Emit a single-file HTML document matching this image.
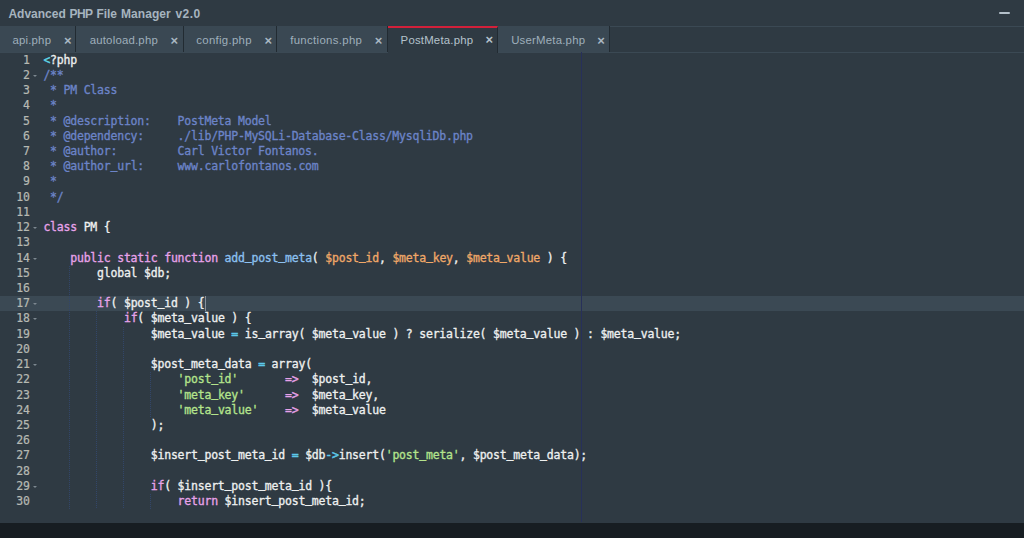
<!DOCTYPE html>
<html><head><meta charset="utf-8"><title>Advanced PHP File Manager v2.0</title>
<style>
html,body{margin:0;padding:0}
body{width:1024px;height:538px;overflow:hidden;background:#2f3a43;position:relative;font-family:"Liberation Sans",sans-serif}
#title{position:absolute;left:0;top:0;width:1024px;height:26px;background:#2f3a43}
#title .t{position:absolute;left:0;top:5.5px;font-size:12px;letter-spacing:0.17px;font-weight:bold;color:#a6b4bf;line-height:16px;white-space:nowrap}
#title .t span{position:absolute;top:0;white-space:pre}
#min{position:absolute;left:999px;top:12px;width:11px;height:2px;background:#b4c0ca;border-radius:1px}
#tabs{position:absolute;left:0;top:26px;width:1024px;height:27px;background:#2f3a43;border-top:1px solid #3b4954;border-bottom:1px solid #3b4954;box-sizing:border-box}
.tab{position:absolute;top:-1px;height:26px;background:#3a4853;box-sizing:border-box;border-right:1px solid #222b32}
.tab.act{background:#2f3a43;border-top:2px solid #d3203a;height:27px}
.tab .tt{position:absolute;top:6px;font-size:11.4px;line-height:16px;color:#9fafbb;white-space:nowrap}
.tab.act .tt,.tab.act .tx{top:4px;color:#b5c2cc}
.tab .tx{position:absolute;top:6.5px;font-size:13px;line-height:16px;color:#a9b7c2;font-weight:bold}
#ed{position:absolute;left:0;top:0;width:1024px;height:522.5px;font-family:"DejaVu Sans Mono","Liberation Mono",monospace;font-size:11.5px;letter-spacing:-0.2136px;-webkit-text-stroke:0.32px}
.ln{position:absolute;left:0;width:1024px;height:15.22px;line-height:15.22px;white-space:pre}
.ln.cur{background:#3b4954}
.num{position:absolute;left:0;width:29.6px;text-align:right;color:#b6b9b3;-webkit-text-stroke:0.2px}
.fd{position:absolute;left:33px;top:7px;width:0;height:0;border-left:2px solid transparent;border-right:2px solid transparent;border-top:2.5px solid #7d8790}
.code{position:absolute;left:43.4px;color:#eef0f0}
u{text-decoration:none;position:relative;top:-1.6px}
.c{color:#6c84c8} .k{color:#e8a2ea} .f{color:#8cc0f0} .p{color:#f0a868} .s{color:#b4e48c} .o{color:#5cc8ea;-webkit-text-stroke:0.5px} .lt{color:#5fd8e8} .w{color:#eef0f0}
#pm{position:absolute;left:581px;top:52px;width:1px;height:470px;background:#27305a}
.ig{position:absolute;width:1px;background-image:linear-gradient(to bottom,#32466a 50%,transparent 50%);background-size:1px 2px}
#bot{position:absolute;left:0;top:522.5px;width:1024px;height:15.5px;background:#171d22}
#cursor{position:absolute;left:205px;top:296.2px;width:1px;height:15px;background:#85919c}
</style></head><body>
<div id="title"><span class="t"><span style="left:8.4px;letter-spacing:0">Advanced </span><span style="left:69.4px;letter-spacing:-0.5px">PHP </span><span style="left:96.6px;letter-spacing:-0.1px">File </span><span style="left:120.9px;letter-spacing:0.08px">Manager </span><span style="left:175.4px;letter-spacing:0.5px">v2.0</span></span><div id="min"></div></div>
<div id="tabs">
<div class="tab" style="left:0px;width:76px"><span class="tt" style="left:12.4px;letter-spacing:0.2px">api.php</span><span class="tx" style="left:64px">×</span></div>
<div class="tab" style="left:76px;width:107.5px"><span class="tt" style="left:13.7px;letter-spacing:0.2px">autoload.php</span><span class="tx" style="left:94.5px">×</span></div>
<div class="tab" style="left:183.5px;width:93.5px"><span class="tt" style="left:12.8px;letter-spacing:0.3px">config.php</span><span class="tx" style="left:81.10000000000002px">×</span></div>
<div class="tab" style="left:277px;width:110.5px"><span class="tt" style="left:13.2px;letter-spacing:0.33px">functions.php</span><span class="tx" style="left:97.69999999999999px">×</span></div>
<div class="tab act" style="left:387.5px;width:110.0px"><span class="tt" style="left:13.1px;letter-spacing:0.2px">PostMeta.php</span><span class="tx" style="left:98.0px">×</span></div>
<div class="tab" style="left:497.5px;width:112.0px"><span class="tt" style="left:13.7px;letter-spacing:0.21px">UserMeta.php</span><span class="tx" style="left:99.79999999999995px">×</span></div>
</div>
<div id="ed">
<div class="ln" style="top:52.70px"><span class="num">1</span><span class="code"><span class="lt">&lt;</span><span class="w">?php</span></span></div>
<div class="ln" style="top:67.92px"><span class="num">2</span><i class="fd"></i><span class="code"><span class="c">/**</span></span></div>
<div class="ln" style="top:83.14px"><span class="num">3</span><span class="code"><span class="c"> * PM Class</span></span></div>
<div class="ln" style="top:98.36px"><span class="num">4</span><span class="code"><span class="c"> *</span></span></div>
<div class="ln" style="top:113.58px"><span class="num">5</span><span class="code"><span class="c"> * @description:    PostMeta Model</span></span></div>
<div class="ln" style="top:128.80px"><span class="num">6</span><span class="code"><span class="c"> * @dependency:     ./lib/PHP-MySQLi-Database-Class/MysqliDb.php</span></span></div>
<div class="ln" style="top:144.02px"><span class="num">7</span><span class="code"><span class="c"> * @author:         Carl Victor Fontanos.</span></span></div>
<div class="ln" style="top:159.24px"><span class="num">8</span><span class="code"><span class="c"> * @author<u>_</u>url:     www.carlofontanos.com</span></span></div>
<div class="ln" style="top:174.46px"><span class="num">9</span><span class="code"><span class="c"> *</span></span></div>
<div class="ln" style="top:189.68px"><span class="num">10</span><span class="code"><span class="c"> */</span></span></div>
<div class="ln" style="top:204.90px"><span class="num">11</span><span class="code"></span></div>
<div class="ln" style="top:220.12px"><span class="num">12</span><i class="fd"></i><span class="code"><span class="k">class</span><span class="w"> PM {</span></span></div>
<div class="ln" style="top:235.34px"><span class="num">13</span><span class="code"></span></div>
<div class="ln" style="top:250.56px"><span class="num">14</span><i class="fd"></i><span class="code"><span class="w">    </span><span class="k">public static function</span><span class="w"> </span><span class="f">add<u>_</u>post<u>_</u>meta</span><span class="w">( </span><span class="p">$post<u>_</u>id</span><span class="w">, </span><span class="p">$meta<u>_</u>key</span><span class="w">, </span><span class="p">$meta<u>_</u>value</span><span class="w"> ) {</span></span></div>
<div class="ln" style="top:265.78px"><span class="num">15</span><span class="code"><span class="w">        global $db;</span></span></div>
<div class="ln" style="top:281.00px"><span class="num">16</span><span class="code"></span></div>
<div class="ln cur" style="top:296.22px"><span class="num">17</span><i class="fd"></i><span class="code"><span class="w">        </span><span class="k">if</span><span class="w">( $post<u>_</u>id ) {</span></span></div>
<div class="ln" style="top:311.44px"><span class="num">18</span><i class="fd"></i><span class="code"><span class="w">            </span><span class="k">if</span><span class="w">( $meta<u>_</u>value ) {</span></span></div>
<div class="ln" style="top:326.66px"><span class="num">19</span><span class="code"><span class="w">                $meta<u>_</u>value </span><span class="o">=</span><span class="w"> is<u>_</u>array( $meta<u>_</u>value ) ? serialize( $meta<u>_</u>value ) : $meta<u>_</u>value;</span></span></div>
<div class="ln" style="top:341.88px"><span class="num">20</span><span class="code"></span></div>
<div class="ln" style="top:357.10px"><span class="num">21</span><i class="fd"></i><span class="code"><span class="w">                $post<u>_</u>meta<u>_</u>data </span><span class="o">=</span><span class="w"> array(</span></span></div>
<div class="ln" style="top:372.32px"><span class="num">22</span><span class="code"><span class="w">                    </span><span class="s">&#x27;post<u>_</u>id&#x27;</span><span class="w">       </span><span class="k">=&gt;</span><span class="w">  $post<u>_</u>id,</span></span></div>
<div class="ln" style="top:387.54px"><span class="num">23</span><span class="code"><span class="w">                    </span><span class="s">&#x27;meta<u>_</u>key&#x27;</span><span class="w">      </span><span class="k">=&gt;</span><span class="w">  $meta<u>_</u>key,</span></span></div>
<div class="ln" style="top:402.76px"><span class="num">24</span><span class="code"><span class="w">                    </span><span class="s">&#x27;meta<u>_</u>value&#x27;</span><span class="w">    </span><span class="k">=&gt;</span><span class="w">  $meta<u>_</u>value</span></span></div>
<div class="ln" style="top:417.98px"><span class="num">25</span><span class="code"><span class="w">                );</span></span></div>
<div class="ln" style="top:433.20px"><span class="num">26</span><span class="code"></span></div>
<div class="ln" style="top:448.42px"><span class="num">27</span><span class="code"><span class="w">                $insert<u>_</u>post<u>_</u>meta<u>_</u>id </span><span class="o">=</span><span class="w"> $db</span><span class="o">-&gt;</span><span class="w">insert(</span><span class="s">&#x27;post<u>_</u>meta&#x27;</span><span class="w">, $post<u>_</u>meta<u>_</u>data);</span></span></div>
<div class="ln" style="top:463.64px"><span class="num">28</span><span class="code"></span></div>
<div class="ln" style="top:478.86px"><span class="num">29</span><i class="fd"></i><span class="code"><span class="w">                </span><span class="k">if</span><span class="w">( $insert<u>_</u>post<u>_</u>meta<u>_</u>id ){</span></span></div>
<div class="ln" style="top:494.08px"><span class="num">30</span><span class="code"><span class="w">                    </span><span class="k">return</span><span class="w"> $insert<u>_</u>post<u>_</u>meta<u>_</u>id;</span></span></div>
<div id="pm"></div>
<div id="cursor"></div>
<div class="ig" style="left:69.2px;top:265.8px;height:243.5px"></div>
<div class="ig" style="left:96.0px;top:311.4px;height:197.9px"></div>
<div class="ig" style="left:122.9px;top:326.7px;height:182.6px"></div>
<div class="ig" style="left:149.7px;top:372.3px;height:45.7px"></div>
<div class="ig" style="left:149.7px;top:494.1px;height:15.2px"></div>
</div>
<div id="bot"></div>
</body></html>
